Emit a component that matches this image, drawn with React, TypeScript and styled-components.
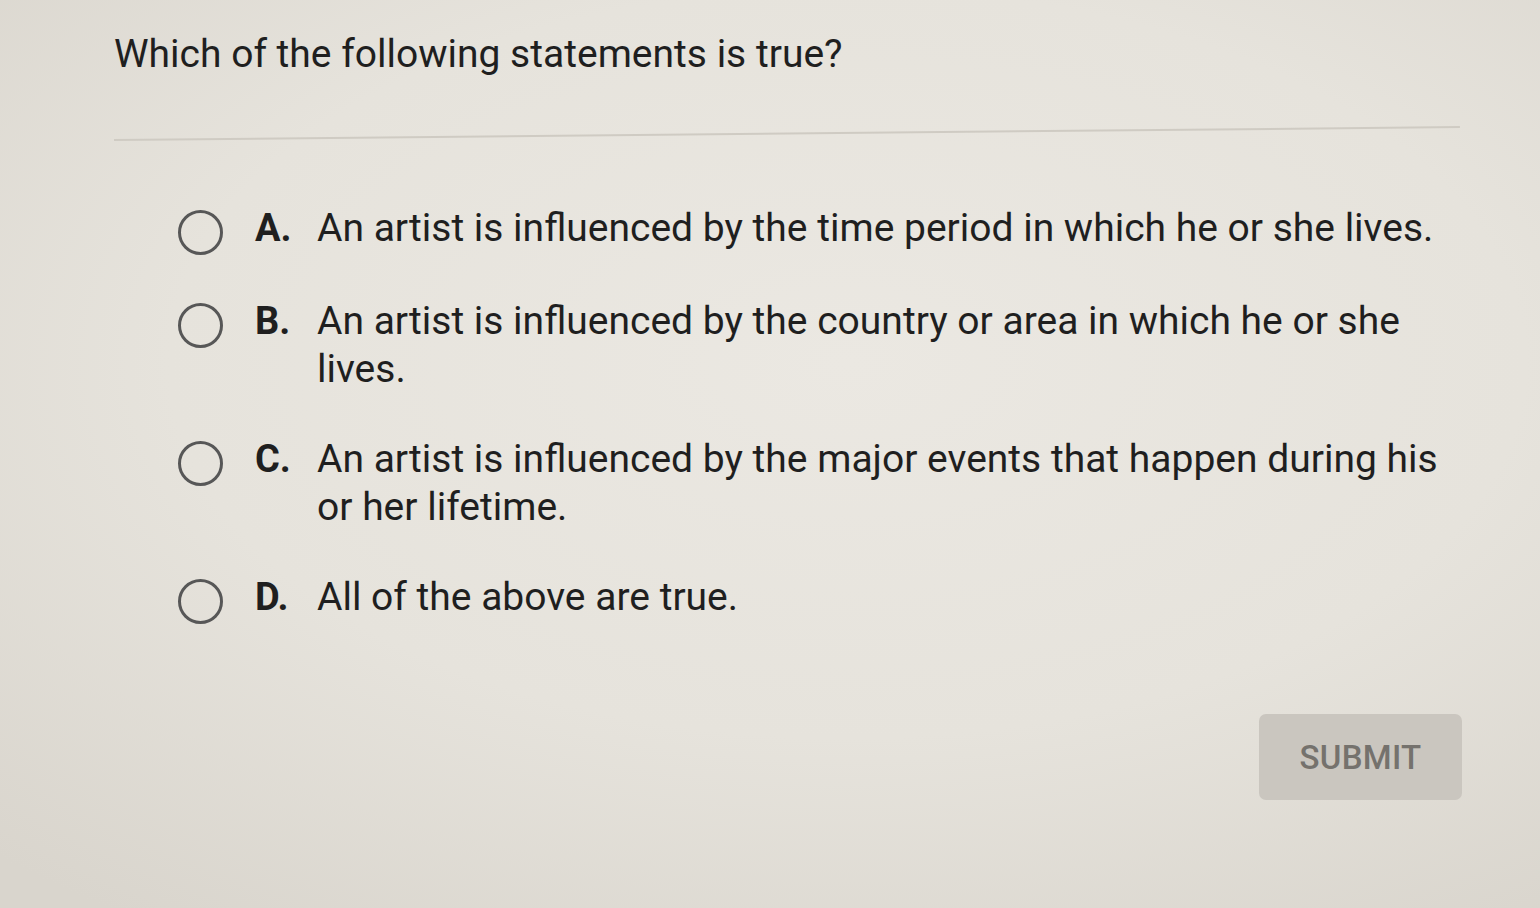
import React from "react";
import styled, { createGlobalStyle } from "styled-components";

const Global = createGlobalStyle`
  html, body { margin: 0; padding: 0; }
  body {
    width: 1540px;
    height: 908px;
    overflow: hidden;
    font-family: Roboto, "Noto Sans", Arial, sans-serif;
    background: radial-gradient(ellipse 80% 75% at 55% 40%, #ebe8e2 0%, #e6e3dc 55%, #d9d5cd 100%);
    color: #262626;
  }
`;

const Page = styled.div`
  box-sizing: border-box;
  width: 1540px;
  height: 908px;
  padding: 28px 78px 0 114px;
  display: flex;
  flex-direction: column;
`;

const Question = styled.h1`
  margin: 0;
  font-size: 39px;
  font-weight: 400;
  line-height: 52px;
  color: #1f1f1f;
`;

const Divider = styled.hr`
  margin: 59px 0 0 0;
  border: none;
  height: 2px;
  background: #cfcbc3;
  width: 1346px;
  transform: rotate(-0.55deg);
  transform-origin: left center;
`;

const Options = styled.div`
  display: flex;
  flex-direction: column;
  gap: 42px;
  margin-top: 63px;
  padding-left: 64px;
`;

const Option = styled.label`
  display: grid;
  grid-template-columns: 48px 75px 1140px;
  align-items: start;
  cursor: pointer;
`;

const Radio = styled.span`
  box-sizing: border-box;
  width: 45px;
  height: 45px;
  border-radius: 50%;
  border: 3px solid #575757;
  margin-top: 6px;
`;

const Letter = styled.span`
  font-size: 38px;
  font-weight: 700;
  line-height: 48px;
  color: #1f1f1f;
  padding-left: 29px;
  white-space: nowrap;
`;

const Text = styled.span`
  font-size: 39px;
  font-weight: 400;
  line-height: 48px;
  color: #1f1f1f;
  padding-left: 16px;
`;

const Footer = styled.div`
  display: flex;
  justify-content: flex-end;
  margin-top: 90px;
`;

const Submit = styled.button`
  width: 203px;
  height: 86px;
  border: none;
  border-radius: 7px;
  background: #cac6bf;
  color: #75726d;
  font-family: Roboto, Arial, sans-serif;
  font-size: 33px;
  font-weight: 500;
  letter-spacing: 0.3px;
  cursor: default;
`;

const items = [
  { l: "A.", t: "An artist is influenced by the time period in which he or she lives." },
  { l: "B.", t: "An artist is influenced by the country or area in which he or she lives." },
  { l: "C.", t: "An artist is influenced by the major events that happen during his or her lifetime." },
  { l: "D.", t: "All of the above are true." },
];

export default function App() {
  return (
    <>
      <Global />
      <Page>
        <Question>Which of the following statements is true?</Question>
        <Divider />
        <Options>
          {items.map((it) => (
            <Option key={it.l}>
              <Radio />
              <Letter>{it.l}</Letter>
              <Text>{it.t}</Text>
            </Option>
          ))}
        </Options>
        <Footer>
          <Submit>SUBMIT</Submit>
        </Footer>
      </Page>
    </>
  );
}
